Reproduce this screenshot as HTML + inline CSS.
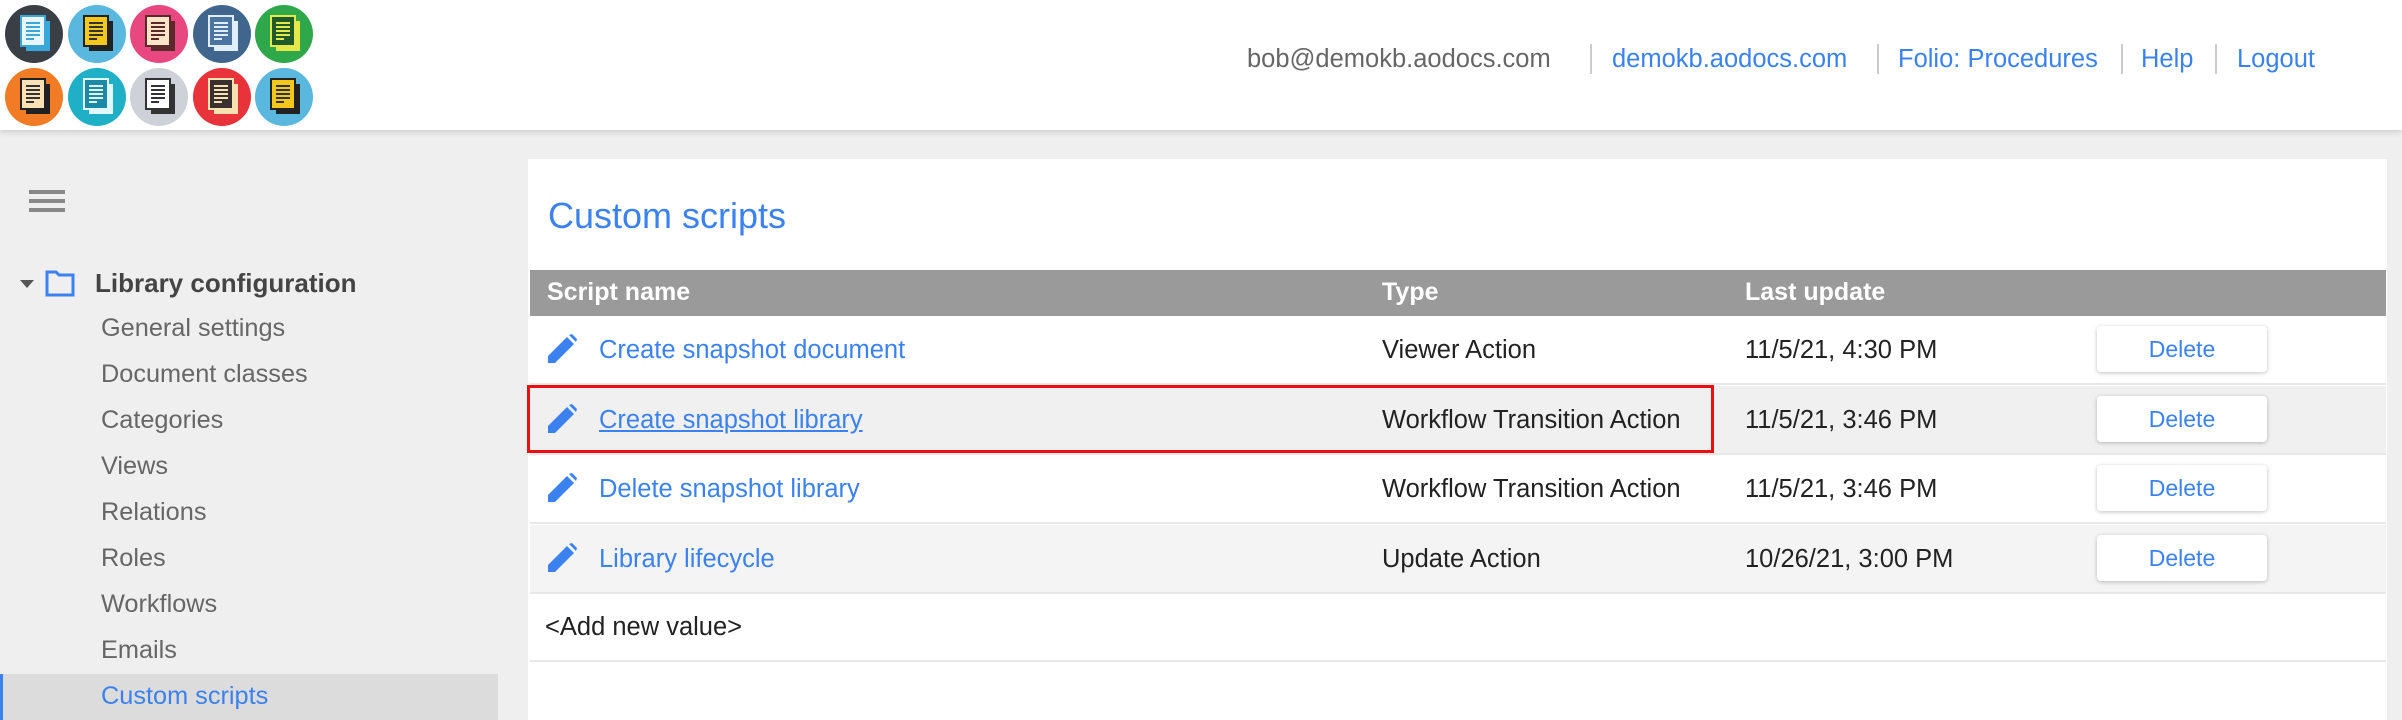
<!DOCTYPE html>
<html><head><meta charset="utf-8"><style>
*{margin:0;padding:0;box-sizing:border-box}
body{width:2402px;height:720px;overflow:hidden;background:#efefef;font-family:"Liberation Sans",Arial,sans-serif;position:relative}
.a{position:absolute;white-space:nowrap}
#hdr{position:absolute;left:0;top:0;width:2402px;height:130px;background:#fff;box-shadow:0 2px 6px rgba(0,0,0,.15)}
.hl{font-size:25.5px;top:45px;color:#3b82f0}
.sep{position:absolute;top:44px;width:2px;height:30px;background:#ccc}
.side{font-size:25.3px;color:#666;left:101px}
#main{position:absolute;left:528px;top:159px;width:1859px;height:561px;background:#fff}
.row{position:absolute;left:2px;width:1856px;height:69px;border-bottom:2px solid #e8e8e8}
.row .t{position:absolute;font-size:25.5px;top:20px;color:#222;white-space:nowrap}
.row .lk{left:69px;color:#3b82f0}
.btn{position:absolute;left:1567px;top:10px;width:170px;height:46px;background:#fff;border-radius:4px;box-shadow:0 1px 4px rgba(0,0,0,.25);color:#3b82f0;font-size:23px;text-align:center;line-height:46px}
.pen{position:absolute;left:17px;top:18px}
</style></head><body>
<div id="hdr">
<svg class="a" style="left:0;top:0" width="330" height="130" viewBox="0 0 330 130">
<defs>
<g id="ln"><path d="M-7 -8h14M-7 -4h14M-7 0h14M-7 4h14M-7 8h8" stroke-width="2" fill="none"/></g>
</defs>
<g>
<circle cx="34" cy="34" r="29" fill="#3a3f46"/><rect x="26" y="21" width="24" height="30" fill="#39a8d8"/><rect x="21" y="16" width="24" height="30" fill="#eaf6ff" stroke="#39a8d8" stroke-width="2"/><use href="#ln" x="33" y="31" stroke="#39a8d8"/>
<circle cx="97" cy="34" r="29" fill="#5ab7dd"/><rect x="89" y="21" width="24" height="30" fill="#222"/><rect x="84" y="16" width="24" height="30" fill="#f4c81a" stroke="#222" stroke-width="2"/><use href="#ln" x="96" y="31" stroke="#333"/>
<circle cx="159" cy="34" r="29" fill="#e8487f"/><rect x="151" y="21" width="24" height="30" fill="#5a2a2a"/><rect x="146" y="16" width="24" height="30" fill="#fbe4c8" stroke="#5a2a2a" stroke-width="2"/><use href="#ln" x="158" y="31" stroke="#5a2a2a"/>
<circle cx="222" cy="34" r="29" fill="#41668e"/><rect x="214" y="21" width="24" height="30" fill="#dfeefa"/><rect x="209" y="16" width="24" height="30" fill="#4b74a0" stroke="#dfeefa" stroke-width="2"/><use href="#ln" x="221" y="31" stroke="#dfeefa"/>
<circle cx="284" cy="34" r="29" fill="#2ea84a"/><rect x="276" y="21" width="24" height="30" fill="#e6e84a"/><rect x="271" y="16" width="24" height="30" fill="#1e5a2a" stroke="#e6e84a" stroke-width="2"/><use href="#ln" x="283" y="31" stroke="#e6e84a"/>
<circle cx="34" cy="97" r="29" fill="#f27c26"/><rect x="26" y="84" width="24" height="30" fill="#222"/><rect x="21" y="79" width="24" height="30" fill="#fbe1b5" stroke="#222" stroke-width="2"/><use href="#ln" x="33" y="94" stroke="#333"/>
<circle cx="97" cy="97" r="29" fill="#1fb0c8"/><rect x="89" y="84" width="24" height="30" fill="#e0f8ff"/><rect x="84" y="79" width="24" height="30" fill="#1a8aa6" stroke="#e0f8ff" stroke-width="2"/><use href="#ln" x="96" y="94" stroke="#e0f8ff"/>
<circle cx="159" cy="97" r="29" fill="#cfd1d8"/><rect x="151" y="84" width="24" height="30" fill="#333"/><rect x="146" y="79" width="24" height="30" fill="#fff" stroke="#333" stroke-width="2"/><use href="#ln" x="158" y="94" stroke="#333"/>
<circle cx="222" cy="97" r="29" fill="#e8333b"/><rect x="214" y="84" width="24" height="30" fill="#f6e2b0"/><rect x="209" y="79" width="24" height="30" fill="#3a3030" stroke="#f6e2b0" stroke-width="2"/><use href="#ln" x="221" y="94" stroke="#f6e2b0"/>
<circle cx="284" cy="97" r="29" fill="#5ab7dd"/><rect x="276" y="84" width="24" height="30" fill="#222"/><rect x="271" y="79" width="24" height="30" fill="#f4c81a" stroke="#222" stroke-width="2"/><use href="#ln" x="283" y="94" stroke="#333"/>
</g>
</svg>
<div class="a hl" style="left:1247px;color:#666">bob@demokb.aodocs.com</div>
<div class="sep" style="left:1590px"></div>
<div class="a hl" style="left:1612px">demokb.aodocs.com</div>
<div class="sep" style="left:1877px"></div>
<div class="a hl" style="left:1898px">Folio: Procedures</div>
<div class="sep" style="left:2121px"></div>
<div class="a hl" style="left:2141px">Help</div>
<div class="sep" style="left:2215px"></div>
<div class="a hl" style="left:2237px">Logout</div>
</div>

<div class="a" style="left:29px;top:190px;width:36px;height:4px;background:#888;box-shadow:0 9px 0 #888,0 18px 0 #888"></div>
<div class="a" style="left:20px;top:280px;width:0;height:0;border-left:7px solid transparent;border-right:7px solid transparent;border-top:8px solid #555"></div>
<svg class="a" style="left:45px;top:269px" width="30" height="28" viewBox="0 0 30 28"><path d="M2 3h9l3 3h14v20H2z" fill="none" stroke="#3b82f0" stroke-width="3"/></svg>
<div class="a" style="left:95px;top:268px;font-size:26px;font-weight:bold;color:#444">Library configuration</div>
<div class="a side" style="top:314px">General settings</div>
<div class="a side" style="top:360px">Document classes</div>
<div class="a side" style="top:406px">Categories</div>
<div class="a side" style="top:452px">Views</div>
<div class="a side" style="top:498px">Relations</div>
<div class="a side" style="top:544px">Roles</div>
<div class="a side" style="top:590px">Workflows</div>
<div class="a side" style="top:636px">Emails</div>
<div class="a" style="left:0;top:674px;width:498px;height:46px;background:#dcdcdc;border-left:3px solid #3b82f0"></div>
<div class="a side" style="top:682px;color:#3b82f0">Custom scripts</div>

<div id="main">
<div class="a" style="left:20px;top:36px;font-size:36px;color:#3b82f0">Custom scripts</div>
<div class="a" style="left:2px;top:111px;width:1856px;height:46px;background:#9a9a9a"></div>
<div class="a" style="left:19px;top:119px;font-size:25px;font-weight:bold;color:#fff">Script name</div>
<div class="a" style="left:854px;top:119px;font-size:25px;font-weight:bold;color:#fff">Type</div>
<div class="a" style="left:1217px;top:119px;font-size:25px;font-weight:bold;color:#fff">Last update</div>

<div class="row" style="top:157px;background:#fff">
<svg class="pen" width="30" height="30" viewBox="0 0 30 30"><path d="M1 29v-7L20 3l7 7L8 29z M22 1l3-1 5 5-1 3z" fill="#3b82f0"/></svg>
<div class="t lk">Create snapshot document</div><div class="t" style="left:852px">Viewer Action</div><div class="t" style="left:1215px">11/5/21, 4:30 PM</div><div class="btn">Delete</div></div>
<div class="row" style="top:227px;background:#f0f0f0">
<svg class="pen" width="30" height="30" viewBox="0 0 30 30"><path d="M1 29v-7L20 3l7 7L8 29z M22 1l3-1 5 5-1 3z" fill="#3b82f0"/></svg>
<div class="t lk" style="text-decoration:underline">Create snapshot library</div><div class="t" style="left:852px">Workflow Transition Action</div><div class="t" style="left:1215px">11/5/21, 3:46 PM</div><div class="btn">Delete</div></div>
<div class="row" style="top:296px;background:#fff">
<svg class="pen" width="30" height="30" viewBox="0 0 30 30"><path d="M1 29v-7L20 3l7 7L8 29z M22 1l3-1 5 5-1 3z" fill="#3b82f0"/></svg>
<div class="t lk">Delete snapshot library</div><div class="t" style="left:852px">Workflow Transition Action</div><div class="t" style="left:1215px">11/5/21, 3:46 PM</div><div class="btn">Delete</div></div>
<div class="row" style="top:366px;background:#f4f4f4">
<svg class="pen" width="30" height="30" viewBox="0 0 30 30"><path d="M1 29v-7L20 3l7 7L8 29z M22 1l3-1 5 5-1 3z" fill="#3b82f0"/></svg>
<div class="t lk">Library lifecycle</div><div class="t" style="left:852px">Update Action</div><div class="t" style="left:1215px">10/26/21, 3:00 PM</div><div class="btn">Delete</div></div>
<div class="row" style="top:436px;height:67px;background:#fff"><div class="t" style="left:15px;top:18px">&lt;Add new value&gt;</div></div>
<div class="a" style="left:-1px;top:226px;width:1187px;height:68px;border:3px solid #e81010"></div>
</div>
</body></html>
